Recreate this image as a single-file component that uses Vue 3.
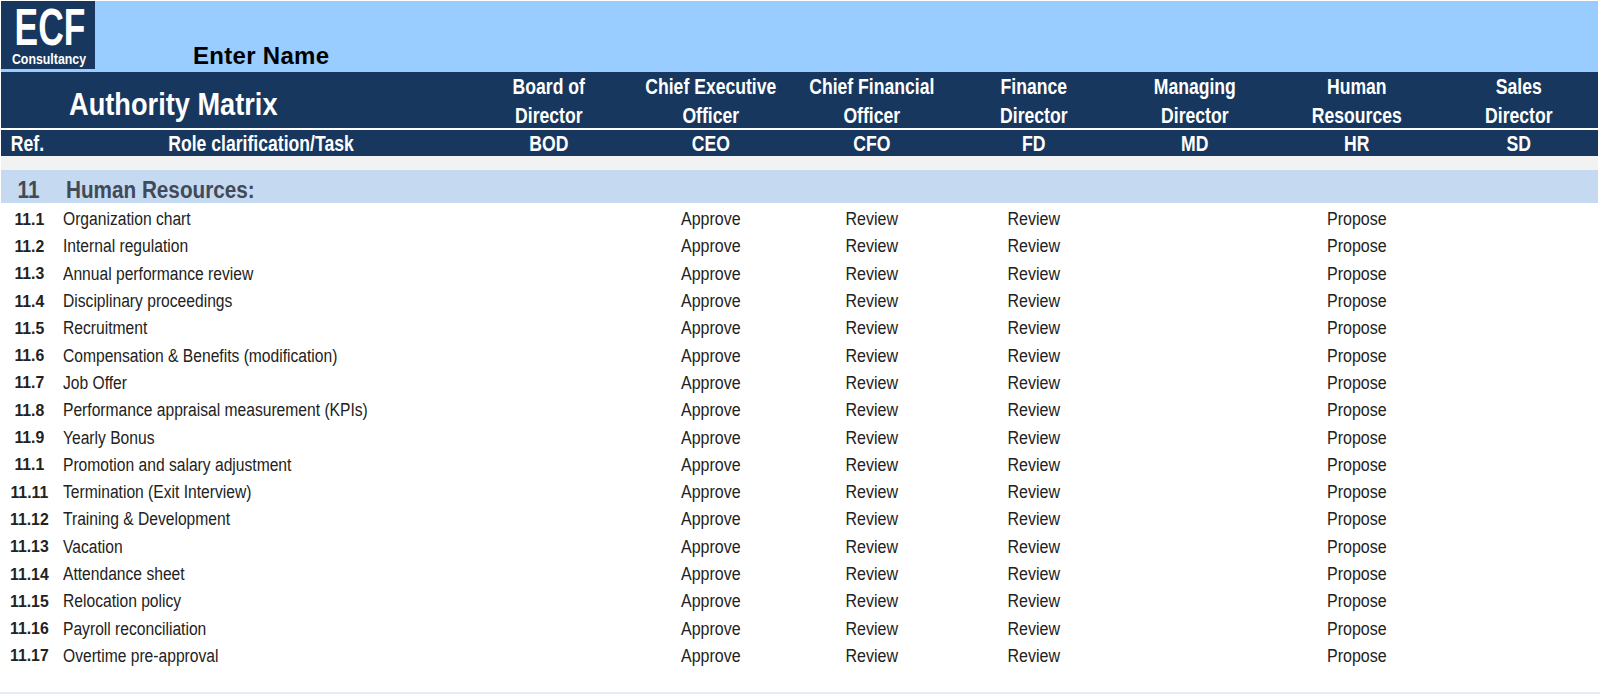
<script setup>
const roles = [
  { top: 'Board of', bottom: 'Director', code: 'BOD' },
  { top: 'Chief Executive', bottom: 'Officer', code: 'CEO' },
  { top: 'Chief Financial', bottom: 'Officer', code: 'CFO' },
  { top: 'Finance', bottom: 'Director', code: 'FD' },
  { top: 'Managing', bottom: 'Director', code: 'MD' },
  { top: 'Human', bottom: 'Resources', code: 'HR' },
  { top: 'Sales', bottom: 'Director', code: 'SD' },
]
const tasks = [
  ['11.1', 'Organization chart'],
  ['11.2', 'Internal regulation'],
  ['11.3', 'Annual performance review'],
  ['11.4', 'Disciplinary proceedings'],
  ['11.5', 'Recruitment'],
  ['11.6', 'Compensation & Benefits (modification)'],
  ['11.7', 'Job Offer'],
  ['11.8', 'Performance appraisal measurement (KPIs)'],
  ['11.9', 'Yearly Bonus'],
  ['11.1', 'Promotion and salary adjustment'],
  ['11.11', 'Termination (Exit Interview)'],
  ['11.12', 'Training & Development'],
  ['11.13', 'Vacation'],
  ['11.14', 'Attendance sheet'],
  ['11.15', 'Relocation policy'],
  ['11.16', 'Payroll reconciliation'],
  ['11.17', 'Overtime pre-approval'],
]
</script>

<template>
  <div class="sheet">
    <header class="brand">
      <div class="logo">
        <span class="logo-main">ECF</span>
        <span class="logo-sub">Consultancy</span>
      </div>
      <div class="name">Enter Name</div>
    </header>

    <div class="grid title-row">
      <div class="title">Authority Matrix</div>
      <div v-for="r in roles" :key="r.code" class="role">
        <span>{{ r.top }}</span>
        <span>{{ r.bottom }}</span>
      </div>
    </div>

    <div class="grid code-row">
      <div class="squeeze">Ref.</div>
      <div class="squeeze">Role clarification/Task</div>
      <div v-for="r in roles" :key="r.code" class="squeeze">{{ r.code }}</div>
    </div>

    <div class="spacer"></div>

    <div class="section">
      <span class="section-no">11</span>
      <span class="section-name">Human Resources:</span>
    </div>

    <div class="rows">
      <div v-for="(t, i) in tasks" :key="i" class="grid row">
        <div class="ref">{{ t[0] }}</div>
        <div class="task">{{ t[1] }}</div>
        <div></div>
        <div class="cell">Approve</div>
        <div class="cell">Review</div>
        <div class="cell">Review</div>
        <div></div>
        <div class="cell">Propose</div>
        <div></div>
      </div>
    </div>
  </div>
</template>

<style>
html, body { margin: 0; background: #fff; }
</style>

<style scoped>
.sheet {
  width: 1600px;
  height: 694px;
  overflow: hidden;
  box-sizing: border-box;
  padding: 1px 2px 0 1px;
  border-bottom: 2px solid #e6ecf5;
  font-family: "Liberation Sans", Arial, sans-serif;
  background: #fff;
}
.grid {
  display: grid;
  grid-template-columns: 53px 414px repeat(7, 161.6px);
  align-items: center;
}
.brand {
  height: 71px;
  background: #99ccff;
  display: flex;
  align-items: flex-start;
}
.logo {
  box-sizing: border-box;
  width: 94px;
  height: 68px;
  padding: 2px 0 0 3px;
  background: #17375e;
  color: #fff;
  display: flex;
  flex-direction: column;
  align-items: center;
  font-weight: 700;
}
.logo-main {
  font-size: 46px;
  line-height: 48px;
  transform: scale(0.77, 1.13);
}
.logo-sub {
  font-size: 13px;
  line-height: 15px;
  transform: scale(0.95, 1.18);
  white-space: nowrap;
}
.name {
  margin: 42px 0 0 98px;
  font-size: 24px;
  line-height: 26px;
  font-weight: 700;
  letter-spacing: 0.3px;
  color: #000;
}
.title-row {
  box-sizing: border-box;
  height: 58px;
  padding-top: 1px;
  background: #17375e;
  color: #fff;
  border-bottom: 2px solid #fff;
}
.title {
  grid-column: 1 / 3;
  margin-top: 5px;
  padding-left: 68px;
  font-size: 32px;
  font-weight: 700;
  transform: scaleX(0.85);
  transform-origin: 68px 50%;
}
.role {
  display: flex;
  flex-direction: column;
  align-items: center;
  font-size: 22px;
  line-height: 28.5px;
  font-weight: 700;
  white-space: nowrap;
  transform: scaleX(0.8);
}
.code-row {
  box-sizing: border-box;
  height: 26px;
  padding-top: 1px;
  background: #17375e;
  color: #fff;
  font-size: 22px;
  font-weight: 700;
  text-align: center;
}
.squeeze {
  transform: scaleX(0.8);
  white-space: nowrap;
}
.spacer {
  height: 14px;
  background: #f2f2f2;
}
.section {
  box-sizing: border-box;
  height: 33px;
  padding-top: 7px;
  background: #c5d9f1;
  display: flex;
  align-items: center;
  color: #404a58;
  font-weight: 700;
  font-size: 23px;
}
.section-no {
  width: 55px;
  text-align: center;
  transform: scaleX(0.9);
}
.section-name {
  margin-left: 10px;
  transform: scaleX(0.9);
  transform-origin: 0 50%;
}
.rows {
  padding-top: 3px;
}
.row {
  height: 27.3px;
  font-size: 18px;
  color: #222;
}
.ref {
  font-weight: 700;
  text-align: center;
  font-size: 17px;
  padding-left: 4px;
  transform: scaleX(0.93);
  white-space: nowrap;
}
.task {
  padding-left: 9px;
  white-space: nowrap;
  transform: scaleX(0.868);
  transform-origin: 9px 50%;
}
.cell {
  text-align: center;
  transform: scaleX(0.89);
}
</style>
